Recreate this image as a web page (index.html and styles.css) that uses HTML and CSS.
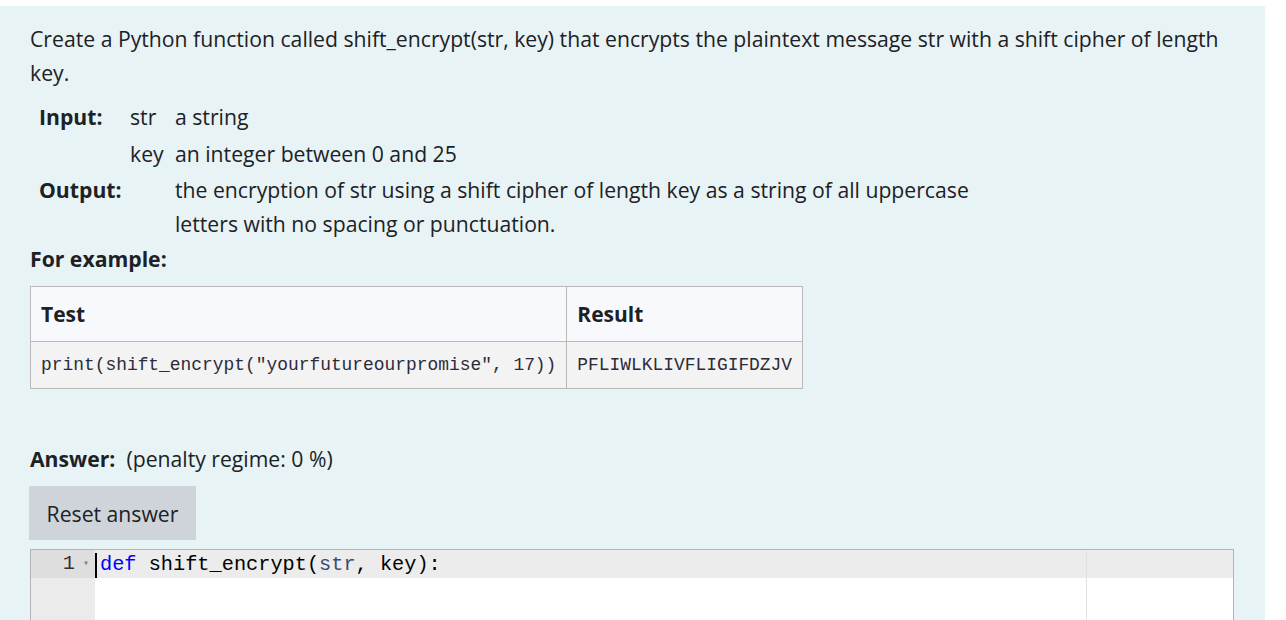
FILE: index.html
```html
<!DOCTYPE html>
<html>
<head>
<meta charset="utf-8">
<link rel="stylesheet" href="styles.css">
</head>
<body>
<div class="panel">
  <p class="intro">Create a Python function called shift_encrypt(str, key) that encrypts the plaintext message str with a shift cipher of length key.</p>
  <table class="spec">
    <tr><th>Input:</th><td class="name">str</td><td class="desc">a string</td></tr>
    <tr><th></th><td class="name">key</td><td class="desc">an integer between 0 and 25</td></tr>
    <tr><th>Output:</th><td class="name"></td><td class="desc">the encryption of str using a shift cipher of length key as a string of all uppercase letters with no spacing or punctuation.</td></tr>
  </table>
  <div class="forex">For example:</div>
  <table class="examples">
    <tr><th class="c1">Test</th><th class="c2">Result</th></tr>
    <tr><td class="c1">print(shift_encrypt("yourfutureourpromise", 17))</td><td class="c2">PFLIWLKLIVFLIGIFDZJV</td></tr>
  </table>
  <div class="answer"><b>Answer:</b>&nbsp; (penalty regime: 0 %)</div>
  <button class="reset">Reset answer</button>
  <div class="editor">
    <div class="gutter">
      <div class="gline active"><span class="num">1</span><span class="fold">&#9662;</span></div>
    </div>
    <div class="content">
      <div class="line active"><span class="cursor"></span><span class="kw">def</span> shift_encrypt(<span class="fn">str</span>, key):</div>
      <div class="margin"></div>
    </div>
  </div>
</div>
</body>
</html>
```
FILE: styles.css
```css
html, body {
  margin: 0;
  padding: 0;
  background: #ffffff;
  overflow: hidden;
}
body {
  font-family: "Open Sans", "Noto Sans", sans-serif;
  color: #1d2125;
  font-size: 21.2px;
}
.panel {
  margin-top: 6px;
  width: 1235px;
  height: 640px;
  background: #e7f3f5;
  padding: 16px 0 0 30px;
}
.intro {
  margin: 0;
  line-height: 34px;
  width: 1205px;
}
.spec {
  border-collapse: collapse;
  margin: 10px 0 0 9px;
}
.spec th, .spec td {
  padding: 0;
  vertical-align: top;
  line-height: 34px;
  text-align: left;
}
.spec tr:first-child th, .spec tr:first-child td { height: 37px; }
.spec tr:nth-child(2) td { height: 36px; }
.spec th {
  width: 91px;
  font-weight: 700;
}
.spec td.name {
  width: 45px;
}
.spec td.desc {
  width: 815px;
}
.forex {
  font-weight: 700;
  line-height: 34px;
  margin-top: 1px;
}
.examples {
  border-collapse: collapse;
  margin-top: 10px;
}
.examples th, .examples td {
  border: 1px solid #b9b9b9;
  text-align: left;
  padding: 0 10px;
  white-space: nowrap;
}
.examples th {
  background: #f8f9fd;
  height: 54px;
  font-weight: 700;
  font-size: 21px;
}
.examples td {
  background: #f3f3f3;
  height: 46px;
  font-family: "Liberation Mono", "DejaVu Sans Mono", monospace;
  font-size: 17.9px;
  color: #2b2b3a;
}
.examples .c1 { width: 515px; }
.examples .c2 { width: 215px; }
.answer {
  margin-top: 53px;
  line-height: 34px;
}
.answer b { font-weight: 700; }
.reset {
  display: block;
  margin: 10px 0 0 -1px;
  height: 54px;
  width: 167px;
  border: none;
  background: #ced4da;
  color: #1d2125;
  font-family: "Open Sans", "Noto Sans", sans-serif;
  font-size: 21.2px;
  padding: 0;
}
.editor {
  margin-top: 9px;
  width: 1202px;
  height: 120px;
  border: 1px solid #b3b3b3;
  background: #ffffff;
  display: flex;
  font-family: "Liberation Mono", "DejaVu Sans Mono", monospace;
  font-size: 20.3px;
}
.gutter {
  width: 64px;
  background: #ebebeb;
  flex: none;
}
.gline {
  height: 28px;
  line-height: 28px;
  display: flex;
  justify-content: flex-end;
  align-items: center;
  padding-right: 6px;
  color: #333;
}
.gline.active { background: #dedede; }
.num { margin-right: 8px; }
.fold { font-size: 10px; color: #888; }
.content {
  flex: 1;
  position: relative;
}
.line {
  height: 28px;
  line-height: 30px;
  padding-left: 5px;
  color: #000;
  position: relative;
  white-space: pre;
}
.line.active { background: #ececec; }
.cursor {
  position: absolute;
  left: 0;
  top: 3px;
  width: 2px;
  height: 25px;
  background: #000;
}
.kw { color: #0000ff; }
.fn { color: #3c4c72; }
.margin {
  position: absolute;
  left: 991px;
  top: 0;
  bottom: 0;
  width: 1px;
  background: #e2e2e2;
}
```
